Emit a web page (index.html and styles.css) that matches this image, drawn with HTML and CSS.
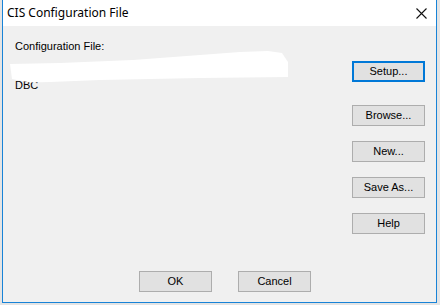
FILE: index.html
```html
<!DOCTYPE html>
<html>
<head>
<meta charset="utf-8">
<link rel="stylesheet" href="styles.css">
</head>
<body>
<div class="window">
  <div class="titlebar">
    <span class="title">CIS Configuration File</span>
    <svg class="close" width="11" height="11" viewBox="0 0 11 11"><path d="M0.5 0.5 L10.5 10.5 M10.5 0.5 L0.5 10.5" stroke="#111" stroke-width="1.1" fill="none"/></svg>
  </div>
  <div class="body">
    <div class="main">
      <div class="fields">
        <div class="label">Configuration File:</div>
        <div class="value">DBC</div>
      </div>
      <div class="actions">
        <div class="btn default">Setup...</div>
        <div class="btn browse">Browse...</div>
        <div class="btn">New...</div>
        <div class="btn">Save As...</div>
        <div class="btn">Help</div>
      </div>
    </div>
    <div class="footer">
      <div class="btn">OK</div>
      <div class="btn">Cancel</div>
    </div>
    <svg class="redact" width="280" height="34" viewBox="0 0 280 34"><path d="M0 14 L50 13 L123 10 L190 5 L230 2 L258 1 L272 3 L278 12 L278 27 L190 28 L90 30 L40 32 L20 32.5 L2 29 Z" fill="#fff"/></svg>
  </div>
</div>
</body>
</html>
```
FILE: styles.css
```css
html, body {
  margin: 0;
  padding: 0;
}
body {
  width: 440px;
  height: 305px;
  background: #e4e4e4;
  overflow: hidden;
}
.window {
  margin-left: 2px;
  width: 435px;
  height: 303px;
  box-sizing: border-box;
  border: 1px solid #1883d7;
  border-top: none;
  background: #f0f0f0;
  display: flex;
  flex-direction: column;
}
.titlebar {
  height: 26px;
  background: #fff;
  display: flex;
  align-items: center;
  justify-content: space-between;
  padding: 0 9px 0 4px;
  flex-shrink: 0;
}
.title {
  font-family: "Noto Sans", "Open Sans", sans-serif;
  font-size: 12px;
  color: #000;
  line-height: 16px;
}
.close {
  display: block;
}
.body {
  position: relative;
  flex: 1;
  display: flex;
  flex-direction: column;
  padding: 14px 11px 10px 12px;
  font-family: "Liberation Sans", Arial, sans-serif;
  font-size: 11px;
  color: #000;
}
.main {
  display: flex;
  justify-content: space-between;
  align-items: flex-start;
}
.fields {
  display: flex;
  flex-direction: column;
}
.label, .value {
  line-height: 13px;
}
.value {
  margin-top: 26px;
}
.actions {
  display: flex;
  flex-direction: column;
  gap: 15px;
  margin-top: 21px;
}
.btn {
  width: 73px;
  height: 21px;
  box-sizing: border-box;
  border: 1px solid #adadad;
  background: #e1e1e1;
  display: flex;
  align-items: center;
  justify-content: center;
  line-height: 13px;
}
.btn.default {
  border: 2px solid #0078d7;
}
.btn.browse {
  margin-top: 8px;
}
.footer {
  margin-top: auto;
  display: flex;
  gap: 26px;
  padding-left: 124px;
}
.redact {
  position: absolute;
  left: 7px;
  top: 24px;
}
```
